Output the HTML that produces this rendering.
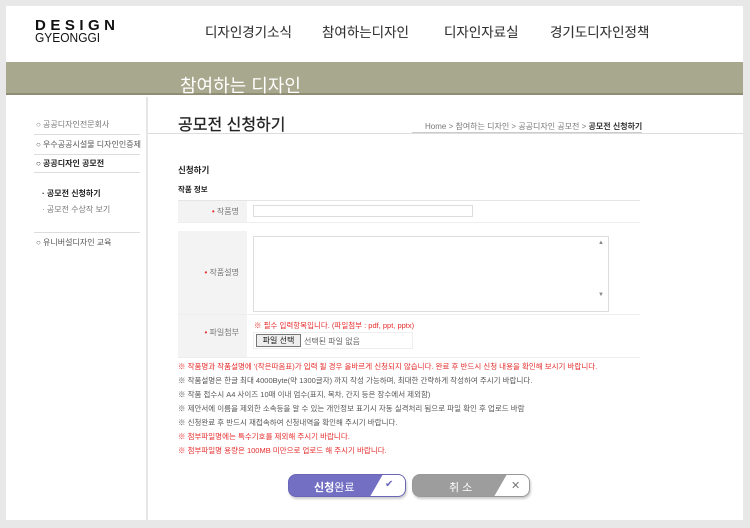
<!DOCTYPE html>
<html><head><meta charset="utf-8"><style>
*{margin:0;padding:0;box-sizing:border-box}
body{width:750px;height:528px;background:#e8e8e8;font-family:"Liberation Sans","Noto Sans CJK KR",sans-serif;position:relative;overflow:hidden}
.a{position:absolute;white-space:nowrap}
#page{position:absolute;left:6px;top:6px;width:737px;height:514px;background:#fff}
.nav{font-size:13.5px;color:#333;top:21px;font-weight:bold;-webkit-text-stroke:0.1px #333}
.side{font-size:8px;color:#777;left:36px}
.note{font-size:7.5px;left:178px;color:#555}
.r{color:#e52d2d}
.lbl{background:#f3f3f3;left:178px;width:69px;font-size:8px;color:#777;text-align:right;padding-right:8px}
</style></head><body>
<div id="page"></div>
<div class="a" style="left:35px;top:19px;font-size:15px;font-weight:bold;letter-spacing:4.5px;line-height:14px;color:#111">DESIGN</div>
<div class="a" style="left:35px;top:32px;font-size:13px;line-height:12px;color:#111;transform:scaleX(0.92);transform-origin:left">GYEONGGI</div>
<div class="a nav" style="left:205px;font-weight:normal">디자인경기소식</div>
<div class="a nav" style="left:322px;font-weight:normal">참여하는디자인</div>
<div class="a nav" style="left:444px;font-weight:normal">디자인자료실</div>
<div class="a nav" style="left:550px;font-weight:normal">경기도디자인정책</div>
<div class="a" style="left:6px;top:62px;width:737px;height:33px;background:#a8a88e;border-bottom:2px solid #8e8e74"></div>
<div class="a" style="left:180px;top:72px;font-size:18px;color:#fff">참여하는 디자인</div>
<div class="a" style="left:146px;top:97px;width:2px;height:423px;background:#e6e6e6"></div>
<div class="a side" style="top:119px">○ 공공디자인전문회사</div>
<div class="a" style="left:34px;top:134px;width:106px;height:1px;background:#ddd"></div>
<div class="a side" style="top:139px;color:#555">○ 우수공공시설물 디자인인증제</div>
<div class="a" style="left:34px;top:154px;width:106px;height:1px;background:#ddd"></div>
<div class="a side" style="top:158px;color:#222;font-weight:bold">○ 공공디자인 공모전</div>
<div class="a" style="left:34px;top:172px;width:106px;height:1px;background:#ddd"></div>
<div class="a side" style="top:188px;left:42px;color:#222;font-weight:bold">· 공모전 신청하기</div>
<div class="a side" style="top:204px;left:42px">· 공모전 수상작 보기</div>
<div class="a" style="left:34px;top:232px;width:106px;height:1px;background:#ddd"></div>
<div class="a side" style="top:237px;color:#555">○ 유니버설디자인 교육</div>
<div class="a" style="left:178px;top:111px;font-size:16px;color:#222;-webkit-text-stroke:0.3px #222">공모전 신청하기</div>
<div class="a" style="left:148px;top:133px;width:595px;height:1px;background:#ddd"></div>
<div class="a" style="left:412px;top:132px;width:230px;height:1px;background:#ccc"></div>
<div class="a" style="left:425px;top:121px;font-size:8px;color:#777">Home &gt; 참여하는 디자인 &gt; 공공디자인 공모전 &gt; <b style="color:#333">공모전 신청하기</b></div>
<div class="a" style="left:178px;top:164px;font-size:8.5px;color:#222;font-weight:bold">신청하기</div>
<div class="a" style="left:178px;top:184px;font-size:7.5px;color:#222;font-weight:bold">작품 정보</div>
<div class="a" style="left:178px;top:200px;width:462px;height:1px;background:#e5e5e5"></div>
<div class="a lbl" style="top:201px;height:21px;line-height:21px"><span class="r">•</span> 작품명</div>
<div class="a" style="left:178px;top:222px;width:462px;height:1px;background:#eee"></div>
<div class="a" style="left:253px;top:205px;width:220px;height:12px;border:1px solid #ddd"></div>
<div class="a lbl" style="top:231px;height:83px;line-height:83px"><span class="r">•</span> 작품설명</div>
<div class="a" style="left:253px;top:236px;width:356px;height:76px;border:1px solid #ddd"></div>
<div class="a" style="left:598px;top:240px;font-size:6px;color:#888">▲</div>
<div class="a" style="left:598px;top:292px;font-size:6px;color:#888">▼</div>
<div class="a" style="left:178px;top:314px;width:462px;height:1px;background:#eee"></div>
<div class="a lbl" style="top:315px;height:42px;line-height:36px"><span class="r">•</span> 파일첨부</div>
<div class="a" style="left:178px;top:357px;width:462px;height:1px;background:#eee"></div>
<div class="a r" style="left:254px;top:320px;font-size:7.5px">※ 필수 입력항목입니다. (파일첨부 : pdf, ppt, pptx)</div>
<div class="a" style="left:253px;top:332px;width:160px;height:17px;border:1px solid #eee"></div>
<div class="a" style="left:256px;top:334px;width:45px;height:13px;border:1px solid #777;background:#eee;font-size:8px;line-height:11px;text-align:center;color:#111">파일 선택</div>
<div class="a" style="left:304px;top:336px;font-size:8px;color:#666">선택된 파일 없음</div>
<div class="a note r" style="top:361px">※ 작품명과 작품설명에 '(작은따옴표)가 입력 될 경우 올바르게 신청되지 않습니다. 완료 후 반드시 신청 내용을 확인해 보시기 바랍니다.</div>
<div class="a note" style="top:375px">※ 작품설명은 한글 최대 4000Byte(약 1300글자) 까지 작성 가능하며, 최대한 간략하게 작성하여 주시기 바랍니다.</div>
<div class="a note" style="top:389px">※ 작품 접수시 A4 사이즈 10매 이내 엄수(표지, 목차, 간지 등은 장수에서 제외함)</div>
<div class="a note" style="top:403px">※ 제안서에 이름을 제외한 소속등을 알 수 있는 개인정보 표기시 자동 실격처리 됨으로 파일 확인 후 업로드 바람</div>
<div class="a note" style="top:417px">※ 신청완료 후 반드시 재접속하여 신청내역을 확인해 주시기 바랍니다.</div>
<div class="a note r" style="top:431px">※ 첨부파일명에는 특수기호를 제외해 주시기 바랍니다.</div>
<div class="a note r" style="top:445px">※ 첨부파일명 용량은 100MB 미만으로 업로드 해 주시기 바랍니다.</div>
<div class="a" style="left:288px;top:474px;width:118px;height:23px;border-radius:8px;background:#7370c4;overflow:hidden;box-shadow:1px 2px 2px #ccc;border:1px solid #6a67b8">
 <div class="a" style="left:86px;top:-2px;width:50px;height:30px;background:#fff;transform:skewX(-30deg)"></div>
 <div class="a" style="left:25px;top:4px;font-size:11px;color:#fff"><b>신청</b>완료</div>
 <div class="a" style="left:96px;top:4px;font-size:10px;color:#6a67b8">✔</div>
</div>
<div class="a" style="left:412px;top:474px;width:118px;height:23px;border-radius:8px;background:#9d9d9d;overflow:hidden;box-shadow:1px 2px 2px #ccc;border:1px solid #999">
 <div class="a" style="left:86px;top:-2px;width:50px;height:30px;background:#fff;transform:skewX(-30deg)"></div>
 <div class="a" style="left:36px;top:4px;font-size:11px;color:#fff">취 소</div>
 <div class="a" style="left:98px;top:4px;font-size:11px;color:#777">✕</div>
</div>
</body></html>
